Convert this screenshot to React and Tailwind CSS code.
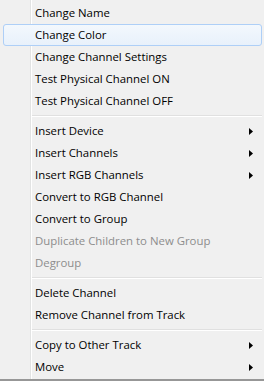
import React from 'react'

const items = [
  { label: 'Change Name' },
  { label: 'Change Color', hover: true },
  { label: 'Change Channel Settings' },
  { label: 'Test Physical Channel ON' },
  { label: 'Test Physical Channel OFF' },
  { sep: true },
  { label: 'Insert Device', sub: true },
  { label: 'Insert Channels', sub: true },
  { label: 'Insert RGB Channels', sub: true },
  { label: 'Convert to RGB Channel' },
  { label: 'Convert to Group' },
  { label: 'Duplicate Children to New Group', disabled: true },
  { label: 'Degroup', disabled: true },
  { sep: true },
  { label: 'Delete Channel' },
  { label: 'Remove Channel from Track' },
  { sep: true },
  { label: 'Copy to Other Track', sub: true },
  { label: 'Move', sub: true },
]

function Arrow() {
  return (
    <svg width="4" height="7" viewBox="0 0 4 7" className="block">
      <path d="M0 0 L4 3.5 L0 7 Z" fill="#000" />
    </svg>
  )
}

function Item({ item }) {
  if (item.sep) {
    return (
      <div className="h-2 flex flex-col justify-center pl-[28px]">
        <div className="h-px bg-[#e0e0e0]" />
        <div className="h-px bg-white" />
      </div>
    )
  }
  return (
    <div
      className={
        'relative z-10 -ml-px h-[22px] flex items-center pl-[31px] pr-[8px] rounded-[3px] border ' +
        (item.hover
          ? 'border-[#aecff7] bg-gradient-to-b from-[#f3f8fd] to-[#e8f1fb]'
          : 'border-transparent')
      }
    >
      <span className={'flex-1 whitespace-nowrap ' + (item.disabled ? 'text-[#8d8d8d]' : 'text-black')}>
        {item.label}
      </span>
      {item.sub && <Arrow />}
    </div>
  )
}

export default function App() {
  return (
    <div
      className="w-[264px] h-[381px] bg-[#f0f0f0] border-b-2 border-[#979797] relative overflow-hidden text-[11.4px] leading-none"
      style={{ fontFamily: '"Open Sans", "Noto Sans", sans-serif' }}
    >
      <div className="absolute top-0 bottom-0 left-[30px] w-[2px] flex">
        <div className="w-px bg-[#e2e3e3]" />
        <div className="w-px bg-white" />
      </div>
      <div className="flex flex-col pt-[2px] pl-[4px] pr-[2px]">
        {items.map((it, i) => (
          <Item key={i} item={it} />
        ))}
      </div>
    </div>
  )
}
